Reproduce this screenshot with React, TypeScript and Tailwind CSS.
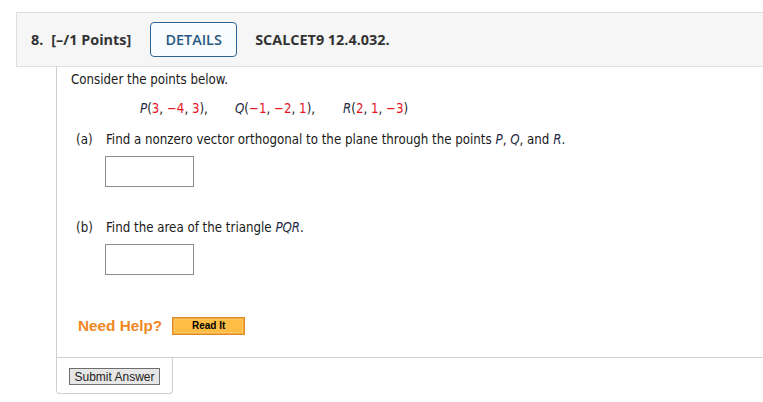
import React from "react"

const body = { fontFamily: '"DejaVu Sans Condensed", "DejaVu Sans", Verdana, sans-serif', fontStretch: "condensed" as const }

function Red({ children }: { children: React.ReactNode }) {
  return <span className="text-[#e8131c]">{children}</span>
}

function Var({ children }: { children: React.ReactNode }) {
  return <span className="italic text-[#1f2a44]">{children}</span>
}

function AnswerBox() {
  return <div className="ml-[34px] h-[31px] w-[89px] border border-[#8c8c8c] bg-white" />
}

export default function App() {
  return (
    <div className="min-h-[402px] w-full bg-white">
      {/* question header */}
      <div className="ml-[16px] mt-[12px] flex h-[55px] items-center border-y border-l border-[#dedede] bg-[#f6f6f6] pl-[14px] font-['Open_Sans',sans-serif] text-[14.4px] font-bold text-[#333]">
        <span>8.</span>
        <span className="ml-[8px]">[–/1 Points]</span>
        <div className="ml-[19px] flex h-[35px] w-[87px] items-center justify-center rounded-[4px] border border-[#2a6496] bg-[#fafbfc] font-semibold text-[#255a86]">
          DETAILS
        </div>
        <span className="ml-[18px]">SCALCET9 12.4.032.</span>
      </div>

      <div className="ml-[56px]">
        <div className="border-b border-l border-[#cfcfcf] pb-[22px] pl-[14px] text-[13.2px] leading-[16px] text-[#1a1a1a]" style={body}>
          <p className="pt-[5px]">Consider the points below.</p>

          <div className="mt-[13px] flex pl-[69px]">
            <span className="w-[95px]">
              <Var>P</Var>(<Red>3</Red>, <Red>−4</Red>, <Red>3</Red>),
            </span>
            <span className="w-[108px]">
              <Var>Q</Var>(<Red>−1</Red>, <Red>−2</Red>, <Red>1</Red>),
            </span>
            <span>
              <Var>R</Var>(<Red>2</Red>, <Red>1</Red>, <Red>−3</Red>)
            </span>
          </div>

          <div className="mt-[15px] flex pl-[5px]">
            <span className="w-[30px]">(a)</span>
            <span>
              Find a nonzero vector orthogonal to the plane through the points <Var>P</Var>, <Var>Q</Var>, and <Var>R</Var>.
            </span>
          </div>
          <div className="mt-[8px]">
            <AnswerBox />
          </div>

          <div className="mt-[33px] flex pl-[5px]">
            <span className="w-[30px]">(b)</span>
            <span>
              Find the area of the triangle <Var>PQR</Var>.
            </span>
          </div>
          <div className="mt-[8px]">
            <AnswerBox />
          </div>

          <div className="mt-[42px] flex h-[18px] items-center pl-[7px] font-['Liberation_Sans',Arial,sans-serif]">
            <span className="text-[15.3px] font-bold leading-[18px] text-[#f0871f]">Need Help?</span>
            <div className="ml-[10px] h-[18px] w-[73px] border border-[#df8a24] bg-[#f7a83a] p-[1px]">
              <div className="flex h-full w-full items-center justify-center border border-[#fbc866] bg-[#ffbd45] text-[10px] font-bold leading-none text-black">
                Read It
              </div>
            </div>
          </div>
        </div>

        <div className="h-[36px] w-[117px] rounded-b-[4px] border-x border-b border-[#cfcfcf] pl-[12px] pt-[10px]">
          <div className="flex h-[17px] w-[91px] items-center justify-center border border-[#6e6e6e] bg-[#e6e6e6] font-['Liberation_Sans',Arial,sans-serif] text-[12px] leading-none text-[#222]">
            Submit Answer
          </div>
        </div>
      </div>
    </div>
  )
}
